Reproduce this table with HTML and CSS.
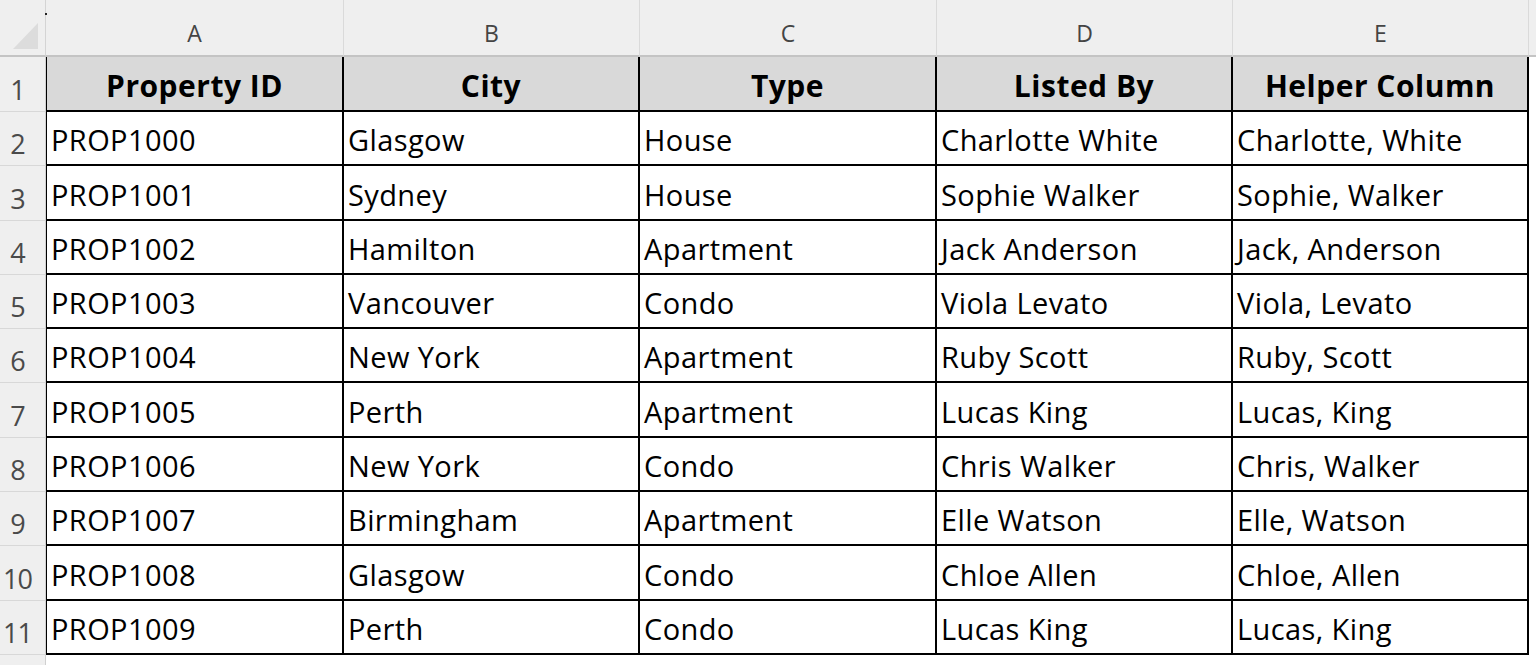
FILE: index.html
```html
<!DOCTYPE html>
<html>
<head>
<meta charset="utf-8">
<link rel="stylesheet" href="styles.css">
</head>
<body>
<div class="sheet">
  <div class="corner"><span class="dot"></span><span class="tri"></span></div>
  <div class="colh">A</div>
  <div class="colh">B</div>
  <div class="colh">C</div>
  <div class="colh">D</div>
  <div class="colh">E</div>
  <div class="colh last"></div>

  <div class="rowh first">1</div>
  <div class="cell head c1">Property ID</div>
  <div class="cell head">City</div>
  <div class="cell head">Type</div>
  <div class="cell head">Listed By</div>
  <div class="cell head">Helper Column</div>
  <div class="pad"></div>

  <div class="rowh">2</div>
  <div class="cell c1">PROP1000</div><div class="cell">Glasgow</div><div class="cell">House</div><div class="cell">Charlotte White</div><div class="cell">Charlotte, White</div><div class="pad"></div>

  <div class="rowh">3</div>
  <div class="cell c1">PROP1001</div><div class="cell">Sydney</div><div class="cell">House</div><div class="cell">Sophie Walker</div><div class="cell">Sophie, Walker</div><div class="pad"></div>

  <div class="rowh">4</div>
  <div class="cell c1">PROP1002</div><div class="cell">Hamilton</div><div class="cell">Apartment</div><div class="cell">Jack Anderson</div><div class="cell">Jack, Anderson</div><div class="pad"></div>

  <div class="rowh">5</div>
  <div class="cell c1">PROP1003</div><div class="cell">Vancouver</div><div class="cell">Condo</div><div class="cell">Viola Levato</div><div class="cell">Viola, Levato</div><div class="pad"></div>

  <div class="rowh">6</div>
  <div class="cell c1">PROP1004</div><div class="cell">New York</div><div class="cell">Apartment</div><div class="cell">Ruby Scott</div><div class="cell">Ruby, Scott</div><div class="pad"></div>

  <div class="rowh">7</div>
  <div class="cell c1">PROP1005</div><div class="cell">Perth</div><div class="cell">Apartment</div><div class="cell">Lucas King</div><div class="cell">Lucas, King</div><div class="pad"></div>

  <div class="rowh">8</div>
  <div class="cell c1">PROP1006</div><div class="cell">New York</div><div class="cell">Condo</div><div class="cell">Chris Walker</div><div class="cell">Chris, Walker</div><div class="pad"></div>

  <div class="rowh">9</div>
  <div class="cell c1">PROP1007</div><div class="cell">Birmingham</div><div class="cell">Apartment</div><div class="cell">Elle Watson</div><div class="cell">Elle, Watson</div><div class="pad"></div>

  <div class="rowh">10</div>
  <div class="cell c1">PROP1008</div><div class="cell">Glasgow</div><div class="cell">Condo</div><div class="cell">Chloe Allen</div><div class="cell">Chloe, Allen</div><div class="pad"></div>

  <div class="rowh">11</div>
  <div class="cell c1">PROP1009</div><div class="cell">Perth</div><div class="cell">Condo</div><div class="cell">Lucas King</div><div class="cell">Lucas, King</div><div class="pad"></div>

  <div class="rowh tail"></div>
  <div class="blank"></div>
</div>
</body>
</html>
```

FILE: styles.css
```css
html, body {
  margin: 0;
  padding: 0;
  background: #ffffff;
}

body {
  font-family: "Open Sans", Lato, "Liberation Sans", sans-serif;
  width: 1536px;
  height: 665px;
  overflow: hidden;
}

.sheet {
  display: grid;
  grid-template-columns: 46px 298px 296px 297px 296px 296px 7px;
  grid-template-rows: 57px 55px repeat(10, 54.3px) 20px;
}

.corner {
  position: relative;
  background: #efefef;
  border-right: 1px solid #d4d4d4;
  border-bottom: 2px solid #c4c4c4;
  box-sizing: border-box;
}

.dot {
  position: absolute;
  left: 45px;
  top: 13px;
  width: 2px;
  height: 2px;
  background: #222;
}

.tri {
  position: absolute;
  left: 13px;
  top: 23px;
  width: 25px;
  height: 26px;
  background: #dcdcdc;
  clip-path: polygon(100% 0, 100% 100%, 0 100%);
}

.colh {
  background: #efefef;
  border-right: 1px solid #dadada;
  border-bottom: 2px solid #c4c4c4;
  box-sizing: border-box;
  color: #444444;
  font-size: 23px;
  display: flex;
  align-items: flex-end;
  justify-content: center;
  padding-bottom: 10px;
  line-height: 24px;
}

.colh.last {
  border-right: none;
}

.rowh {
  background: #efefef;
  border-right: 1px solid #d0d0d0;
  border-bottom: 1px solid #d8d8d8;
  box-sizing: border-box;
  color: #4a4a4a;
  font-size: 27px;
  line-height: 28px;
  display: flex;
  align-items: flex-end;
  justify-content: center;
  padding-right: 10px;
  padding-bottom: 7px;
  letter-spacing: -1px;
}

.rowh.tail {
  border-bottom: none;
}

.cell {
  border-right: 2px solid #000;
  border-bottom: 2px solid #000;
  box-sizing: border-box;
  color: #000;
  font-size: 29px;
  line-height: 30px;
  letter-spacing: 0.4px;
  display: flex;
  align-items: flex-end;
  padding: 0 0 9px 4px;
  white-space: nowrap;
  overflow: hidden;
}

.cell.c1 {
  border-left: 1px solid #000;
}

.cell.head {
  background: #d9d9d9;
  font-weight: 700;
  justify-content: center;
  padding-left: 0;
  font-size: 30px;
  letter-spacing: 0.5px;
}

.pad {
  background: #ffffff;
}

.blank {
  grid-column: 2 / 8;
  background: #ffffff;
}
```
